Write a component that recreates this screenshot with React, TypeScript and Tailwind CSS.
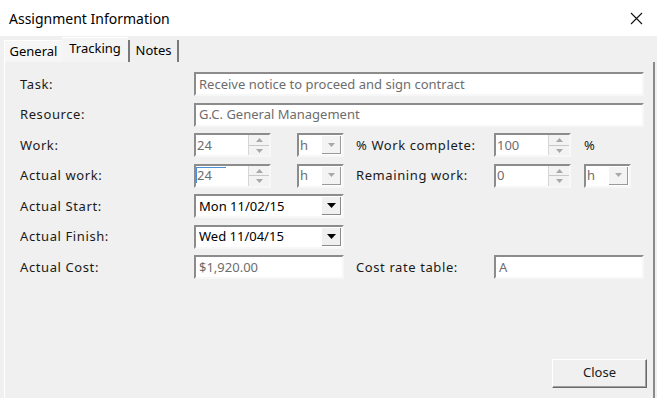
import React from "react";

const sunken =
  "border-2 border-t-[#8c8c8c] border-l-[#8c8c8c] border-b-[#f7f7f7] border-r-[#f7f7f7] bg-white";

const label = "text-[13px] tracking-[0.6px] text-[#1a1a1a]";

function TextBox({ value, w, dark }: { value: string; w: string; dark?: boolean }) {
  return (
    <div className={`${sunken} ${w} h-[24px] flex items-center pl-[3px] ${dark ? "text-black" : "text-[#6d6d6d]"}`}>
      {value}
    </div>
  );
}

function Arrow({ up, color = "#a8a8a8" }: { up?: boolean; color?: string }) {
  return (
    <svg width="7" height="4" viewBox="0 0 7 4">
      <path d={up ? "M0 4 L3.5 0 L7 4 Z" : "M0 0 L3.5 4 L7 0 Z"} fill={color} />
    </svg>
  );
}

function Spinner({ value, focus }: { value: string; focus?: boolean }) {
  return (
    <div className={`${sunken} w-[77px] h-[24px] flex`}>
      <div className="relative flex-1 flex items-center pl-[1px] text-[#6d6d6d]">
        {focus && (
          <>
            <div className="absolute left-0 top-[1px] w-[30px] h-[1px] bg-[#4a90d9]" />
            <div className="absolute left-0 top-[1px] w-[1px] h-[16px] bg-[#4a90d9]" />
          </>
        )}
        {value}
      </div>
      <div className="w-[21px] flex flex-col border-l border-[#d6d6d6]">
        <div className="flex-1 flex items-center justify-center border-b border-[#c8c8c8] bg-[#f3f3f3]">
          <Arrow up />
        </div>
        <div className="flex-1 flex items-center justify-center bg-[#f3f3f3]">
          <Arrow />
        </div>
      </div>
    </div>
  );
}

function Unit() {
  return (
    <div className={`${sunken} w-[47px] h-[24px] flex`}>
      <div className="flex-1 flex items-center text-[#6d6d6d] pl-[1px]">h</div>
      <div className="w-[19px] m-[1px] flex items-center justify-center bg-[#f3f3f3] border-b border-r border-[#9a9a9a]">
        <Arrow />
      </div>
    </div>
  );
}

function DateBox({ value }: { value: string }) {
  return (
    <div className={`${sunken} w-[150px] h-[24px] flex`}>
      <div className="flex-1 flex items-center pl-[3px] text-black">{value}</div>
      <div className="w-[19px] m-[1px] flex items-center justify-center bg-[#f0f0f0] border-b border-r border-[#8a8a8a]">
        <svg width="9" height="5" viewBox="0 0 9 5">
          <path d="M0 0 L4.5 5 L9 0 Z" fill="#000" />
        </svg>
      </div>
    </div>
  );
}

function Row({ label: text, children }: { label: string; children?: React.ReactNode }) {
  return (
    <div className="h-[30.5px] flex items-center">
      <div className={`w-[174px] ${label}`}>{text}</div>
      {children}
    </div>
  );
}

export default function App() {
  return (
    <div className="w-[657px] h-[398px] bg-[#f0f0f0] overflow-hidden text-[13px] font-['Segoe_UI','Noto_Sans','Open_Sans',sans-serif]">
      <div className="h-[36px] bg-white flex items-center justify-between pl-[9px] pr-[14px]">
        <span className="text-[14px] text-black">Assignment Information</span>
        <svg width="13" height="13" viewBox="0 0 13 13">
          <path d="M1 1 L12 12 M12 1 L1 12" stroke="#111" strokeWidth="1.1" />
        </svg>
      </div>

      <div className="pl-[4px] pr-[2px]">
        <div className="h-[26px] flex items-end">
          <div className="h-[22px] w-[58px] flex items-center justify-center bg-[#f6f6f6] border-t border-l border-white text-black">
            General
          </div>
          <div className="h-[25px] w-[66px] flex items-start justify-center pt-[1px] bg-[#f4f4f4] border-t border-white text-black">
            Tracking
          </div>
          <div className="h-[22px] w-[51px] flex items-center justify-center border-l-2 border-r-2 border-[#7a7a7a] text-black">
            Notes
          </div>
        </div>

        <div className="h-[340px] border-l border-white border-r-2 border-r-[#8a8a8a] pl-[15px] pt-[7px]">
          <Row label="Task:">
            <TextBox value="Receive notice to proceed and sign contract" w="w-[450px]" />
          </Row>
          <Row label="Resource:">
            <TextBox value="G.C. General Management" w="w-[450px]" />
          </Row>
          <Row label="Work:">
            <Spinner value="24" />
            <div className="w-[26px]" />
            <Unit />
            <div className="w-[12px]" />
            <div className={`w-[138px] ${label}`}>% Work complete:</div>
            <Spinner value="100" />
            <div className="w-[13px]" />
            <span className={label}>%</span>
          </Row>
          <Row label="Actual work:">
            <Spinner value="24" focus />
            <div className="w-[26px]" />
            <Unit />
            <div className="w-[12px]" />
            <div className={`w-[138px] ${label}`}>Remaining work:</div>
            <Spinner value="0" />
            <div className="w-[13px]" />
            <Unit />
          </Row>
          <Row label="Actual Start:">
            <DateBox value="Mon 11/02/15" />
          </Row>
          <Row label="Actual Finish:">
            <DateBox value="Wed 11/04/15" />
          </Row>
          <Row label="Actual Cost:">
            <TextBox value="$1,920.00" w="w-[150px]" />
            <div className="w-[12px]" />
            <div className={`w-[138px] ${label}`}>Cost rate table:</div>
            <TextBox value="A" w="w-[150px]" />
          </Row>

          <div className="flex justify-end pr-[6px] mt-[76px]">
            <div className="w-[95px] h-[29px] flex items-center justify-center bg-[#f0f0f0] border border-t-white border-l-white border-b-[#6a6a6a] border-r-[#6a6a6a] shadow-[inset_-1px_-1px_0_#a0a0a0] text-[#1a1a1a]">
              Close
            </div>
          </div>
        </div>
      </div>
    </div>
  );
}
